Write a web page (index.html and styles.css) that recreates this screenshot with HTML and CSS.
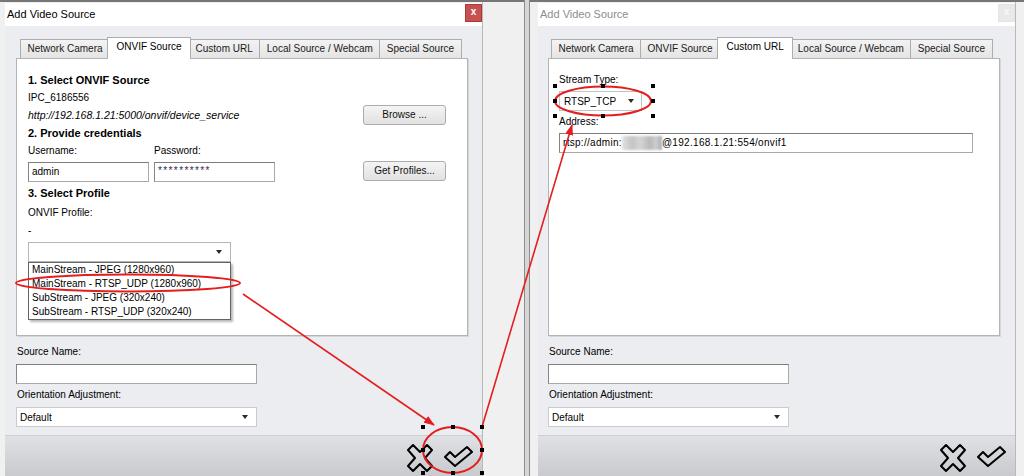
FILE: index.html
```html
<!DOCTYPE html>
<html lang="en">

<head>
    <meta charset="UTF-8">
    <meta name="viewport" content="width=device-width, initial-scale=1.0">
    <title>Add Video Source</title>
    <link rel="stylesheet" href="styles.css">
</head>

<body>
    <div class="screen">
        <!-- left dialog: ONVIF source -->
        <section class="shot shotLeft">
            <div class="win">
                <div class="winTitle">
                    <span>Add Video Source</span>
                    <span class="closeBtn">x</span>
                </div>
                <div class="winBody">
                    <ul class="tabs">
                        <li>Network Camera</li>
                        <li class="active">ONVIF Source</li>
                        <li>Custom URL</li>
                        <li>Local Source / Webcam</li>
                        <li>Special Source</li>
                    </ul>
                    <div class="tabPanel onvif">
                        <div class="colMain">
                            <div class="head">1. Select ONVIF Source</div>
                            <div class="line">IPC_6186556</div>
                            <div class="line url">http://192.168.1.21:5000/onvif/device_service</div>
                            <div class="head">2. Provide credentials</div>
                            <div class="creds">
                                <div class="field">
                                    <div class="line">Username:</div>
                                    <div class="input">admin</div>
                                </div>
                                <div class="field">
                                    <div class="line">Password:</div>
                                    <div class="input pwd">**********</div>
                                </div>
                            </div>
                            <div class="head head3">3. Select Profile</div>
                            <div class="line">ONVIF Profile:</div>
                            <div class="line">-</div>
                            <div class="combo profile">
                                <span class="arrow"></span>
                                <ul class="dropList">
                                    <li>MainStream - JPEG (1280x960)</li>
                                    <li>MainStream - RTSP_UDP (1280x960)</li>
                                    <li>SubStream - JPEG (320x240)</li>
                                    <li>SubStream - RTSP_UDP (320x240)</li>
                                </ul>
                            </div>
                        </div>
                        <div class="colSide">
                            <div class="btn browse">Browse ...</div>
                            <div class="btn getProfiles">Get Profiles...</div>
                        </div>
                    </div>
                    <div class="below">
                        <div class="label">Source Name:</div>
                        <div class="input wide"></div>
                        <div class="label">Orientation Adjustment:</div>
                        <div class="select wide"><span>Default</span><span class="arrow"></span></div>
                    </div>
                </div>
                <div class="winFoot">
                    <svg class="icoX" width="28" height="30" viewBox="0 0 28 30">
                        <polygon points="2,7 7,2 14,9 21,2 26,7 19,15 26,23 21,28 14,21 7,28 2,23 9,15" />
                    </svg>
                    <svg class="icoOk" width="30" height="22" viewBox="0 0 30 22">
                        <polygon points="1,12 6,7 11,12 23,2 28,7 11,21" />
                    </svg>
                </div>
            </div>
        </section>

        <div class="divider"></div>

        <!-- right dialog: custom URL -->
        <section class="shot shotRight">
            <div class="win inactive">
                <div class="winTitle">
                    <span>Add Video Source</span>
                    <span class="closeBtn">x</span>
                </div>
                <div class="winBody">
                    <ul class="tabs">
                        <li>Network Camera</li>
                        <li>ONVIF Source</li>
                        <li class="active">Custom URL</li>
                        <li>Local Source / Webcam</li>
                        <li>Special Source</li>
                    </ul>
                    <div class="tabPanel custom">
                        <div class="line streamLabel">Stream Type:</div>
                        <div class="combo streamType"><span>RTSP_TCP</span><span class="arrow"></span></div>
                        <div class="line addrLabel">Address:</div>
                        <div class="input address">rtsp://admin:<span class="blurred"></span>@192.168.1.21:554/onvif1</div>
                    </div>
                    <div class="below">
                        <div class="label">Source Name:</div>
                        <div class="input wide"></div>
                        <div class="label">Orientation Adjustment:</div>
                        <div class="select wide"><span>Default</span><span class="arrow"></span></div>
                    </div>
                </div>
                <div class="winFoot">
                    <svg class="icoX" width="28" height="30" viewBox="0 0 28 30">
                        <polygon points="2,7 7,2 14,9 21,2 26,7 19,15 26,23 21,28 14,21 7,28 2,23 9,15" />
                    </svg>
                    <svg class="icoOk" width="30" height="22" viewBox="0 0 30 22">
                        <polygon points="1,12 6,7 11,12 23,2 28,7 11,21" />
                    </svg>
                </div>
            </div>
        </section>

        <!-- red markup drawn over both screenshots -->
        <svg class="marks" width="1024" height="476" viewBox="0 0 1024 476">
            <defs>
                <marker id="head" markerWidth="11" markerHeight="8" refX="10" refY="4" orient="auto" markerUnits="userSpaceOnUse">
                    <path d="M0,0 L11,4 L0,8 z" fill="#e41e1e" />
                </marker>
            </defs>
            <ellipse cx="128" cy="283" rx="112" ry="8.5" />
            <line x1="243" y1="294" x2="434" y2="425" marker-end="url(#head)" />
            <ellipse cx="452.5" cy="450" rx="29.5" ry="23" />
            <line x1="482" y1="427" x2="572" y2="125" marker-end="url(#head)" />
            <ellipse cx="603" cy="101" rx="48" ry="14.5" />
            <g class="handles">
                <rect x="421" y="425" width="4" height="4" />
                <rect x="451" y="425" width="4" height="4" />
                <rect x="480" y="425" width="4" height="4" />
                <rect x="421" y="448" width="4" height="4" />
                <rect x="480" y="448" width="4" height="4" />
                <rect x="421" y="471" width="4" height="4" />
                <rect x="451" y="471" width="4" height="4" />
                <rect x="480" y="471" width="4" height="4" />
                <rect x="553" y="84" width="4" height="4" />
                <rect x="601" y="84" width="4" height="4" />
                <rect x="651" y="84" width="4" height="4" />
                <rect x="553" y="99" width="4" height="4" />
                <rect x="651" y="99" width="4" height="4" />
                <rect x="553" y="114" width="4" height="4" />
                <rect x="601" y="114" width="4" height="4" />
                <rect x="651" y="114" width="4" height="4" />
            </g>
        </svg>
    </div>
</body>

</html>
```

FILE: styles.css
```css
html,
body,
div,
ul,
li {
    margin: 0;
    padding: 0;
    list-style: none;
    box-sizing: border-box;
}

body {
    width: 1024px;
    height: 476px;
    overflow: hidden;
    background: #f0f0f0;
    font-family: "Liberation Sans", Arial, sans-serif;
    font-size: 10px;
    color: #000;
}

.screen {
    position: relative;
    display: flex;
    height: 476px;
}

/* screenshot frames */
.shot {
    height: 476px;
    border-top: 2px solid #767676;
    box-sizing: border-box;
}

.shotLeft {
    width: 524px;
    padding-left: 5px;
}

.shotRight {
    width: 494px;
    padding-left: 8px;
}

.divider {
    width: 6px;
    border-left: 1px solid #8c8c8c;
    border-right: 1px solid #8c8c8c;
    background: #d6d6d6;
}

/* dialog window */
.win {
    width: 478px;
    height: 474px;
    display: flex;
    flex-direction: column;
    background: #ecedf0;
    border-right: 1px solid #b9b9b9;
}

.winTitle {
    height: 24px;
    border-top: 1px solid #f0f0f0;
    background: #fff;
    display: flex;
    justify-content: space-between;
    align-items: flex-start;
    padding-left: 2px;
    font-size: 11px;
    line-height: 22px;
}

.inactive .winTitle {
    color: #8d8d8d;
}

.closeBtn {
    width: 17px;
    height: 18px;
    margin-top: 1px;
    background: #c75050;
    border: 1px solid #ad3a3a;
    box-sizing: border-box;
    color: #fff;
    font-weight: bold;
    font-size: 10px;
    line-height: 14px;
    text-align: center;
}

.inactive .closeBtn {
    background: #e9e9ea;
    border-color: #e4e4e4;
    color: #f8f8f8;
}

.winBody {
    flex: 1;
    padding: 11px 0 0 11px;
}

.inactive .winBody {
    padding-left: 10px;
}

/* tabs */
.tabs {
    display: flex;
    align-items: flex-end;
    height: 21px;
    margin-left: 4px;
    position: relative;
    z-index: 1;
}

.inactive .tabs {
    margin-left: 3px;
}

.tabs li {
    height: 19px;
    border: 1px solid #adadad;
    border-bottom: 0;
    margin-right: -1px;
    padding: 0 6.5px;
    line-height: 18px;
    background: linear-gradient(#f3f3f3, #e4e4e4);
    color: #1a1a1a;
    white-space: nowrap;
}

.tabs li.active {
    height: 22px;
    margin: 0 -3px -1px -2px;
    padding: 0 8.5px;
    line-height: 18px;
    background: #fff;
    color: #000;
    position: relative;
    z-index: 2;
}

.tabPanel {
    width: 452px;
    height: 278px;
    border: 1px solid #b4b4b4;
    background: #fff;
    box-shadow: 1px 1px 0 #d5d6d9;
}

.onvif {
    display: flex;
    align-items: flex-start;
    padding: 12px 0 0 11px;
}

.custom {
    padding: 11px 0 0 10px;
}

.colMain {
    width: 335px;
}

.colSide {
    width: 83px;
    display: flex;
    flex-direction: column;
}

.head {
    font-weight: bold;
    font-size: 11px;
    line-height: 18px;
}

.head3 {
    line-height: 22px;
}

.line {
    line-height: 18px;
    white-space: nowrap;
}

.url {
    font-style: italic;
    font-size: 10.5px;
    line-height: 17px;
}

.creds {
    display: flex;
    gap: 5px;
}

.field {
    width: 121px;
}

/* form controls */
.input {
    height: 20px;
    border: 1px solid #a9a9a9;
    border-top-color: #7d7d7d;
    border-left-color: #858585;
    background: #fff;
    padding-left: 3px;
    line-height: 18px;
    white-space: nowrap;
}

.field .input {
    margin-top: 2px;
}

.pwd {
    font-size: 10px;
    letter-spacing: 1.4px;
    line-height: 15px;
    color: #2b2f3d;
}

.combo,
.select {
    position: relative;
    height: 20px;
    border: 1px solid #b6b6b6;
    background: #fff;
    display: flex;
    align-items: center;
    justify-content: space-between;
    padding: 0 8px 0 3px;
}

.profile {
    width: 203px;
    margin-top: 2px;
    justify-content: flex-end;
}

.arrow {
    width: 0;
    height: 0;
    border-left: 3.5px solid transparent;
    border-right: 3.5px solid transparent;
    border-top: 4px solid #2a2a2a;
}

.dropList {
    position: absolute;
    top: 19px;
    left: -1px;
    width: 203px;
    border: 1px solid #646464;
    background: #fff;
    box-shadow: 2px 2px 2px rgba(0, 0, 0, 0.28);
}

.dropList li {
    height: 14px;
    line-height: 14px;
    padding-left: 3px;
    white-space: nowrap;
}

.btn {
    height: 20px;
    border: 1px solid #acacac;
    border-radius: 3px;
    background: linear-gradient(#f4f4f4, #e1e1e1);
    text-align: center;
    line-height: 18px;
    color: #111;
}

.browse {
    margin-top: 34px;
}

.getProfiles {
    margin-top: 36px;
}

.streamLabel {
    line-height: 16px;
    margin-top: 2px;
}

.streamType {
    width: 83px;
    margin-top: 3px;
    padding: 0 7px 0 4px;
    border-color: #c3c3c3;
}

.addrLabel {
    margin-top: 3px;
    line-height: 16px;
}

.address {
    width: 414px;
    margin-top: 3px;
    letter-spacing: 0.3px;
}

.blurred {
    display: inline-block;
    width: 40px;
    height: 14px;
    vertical-align: middle;
    background: linear-gradient(to right, #e2e2e2, #c4c4c4 25%, #d6d6d6 45%, #b9b9b9 70%, #cfcfcf 85%, #a9a9a9);
    filter: blur(1px);
}

.below .label {
    padding-left: 1px;
    line-height: 16px;
    margin-top: 8px;
}

.below .label + .input,
.below .label + .select {
    margin-top: 4px;
}

.below .input + .label {
    margin-top: 3px;
}

.wide {
    width: 241px;
}

.select {
    border-color: #cbcbcb;
}

/* bottom command bar */
.winFoot {
    height: 41px;
    border-top: 1px solid #cdced1;
    background: linear-gradient(#e0e1e4, #c9cacd);
    display: flex;
    justify-content: flex-end;
    align-items: center;
    gap: 10px;
    padding-right: 8px;
}

.winFoot polygon {
    fill: none;
    stroke: #000;
    stroke-width: 2;
    stroke-linejoin: round;
}

.icoX {
    margin-top: 3px;
}

/* annotation layer */
.marks {
    position: absolute;
    top: 0;
    left: 0;
    pointer-events: none;
}

.marks ellipse,
.marks line {
    fill: none;
    stroke: #e41e1e;
    stroke-width: 2;
}

.marks line {
    stroke-width: 1.6;
}

.handles rect {
    fill: #000;
}
```
